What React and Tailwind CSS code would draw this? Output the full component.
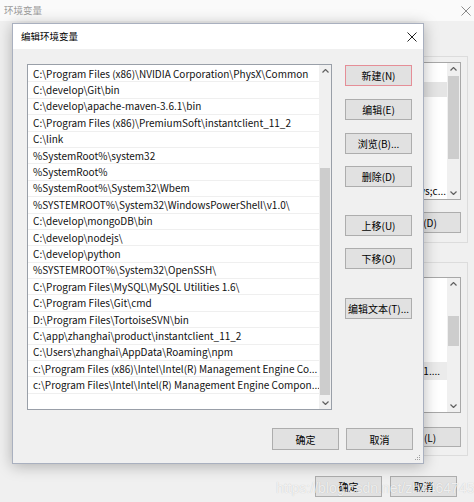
import React from 'react'

const paths = [
    'C:\\Program Files (x86)\\NVIDIA Corporation\\PhysX\\Common',
    'C:\\develop\\Git\\bin',
    'C:\\develop\\apache-maven-3.6.1\\bin',
    'C:\\Program Files (x86)\\PremiumSoft\\instantclient_11_2',
    'C:\\link',
    '%SystemRoot%\\system32',
    '%SystemRoot%',
    '%SystemRoot%\\System32\\Wbem',
    '%SYSTEMROOT%\\System32\\WindowsPowerShell\\v1.0\\',
    'C:\\develop\\mongoDB\\bin',
    'C:\\develop\\nodejs\\',
    'C:\\develop\\python',
    '%SYSTEMROOT%\\System32\\OpenSSH\\',
    'C:\\Program Files\\MySQL\\MySQL Utilities 1.6\\',
    'C:\\Program Files\\Git\\cmd',
    'D:\\Program Files\\TortoiseSVN\\bin',
    'C:\\app\\zhanghai\\product\\instantclient_11_2',
    'C:\\Users\\zhanghai\\AppData\\Roaming\\npm',
    'c:\\Program Files (x86)\\Intel\\Intel(R) Management Engine Co...',
    'c:\\Program Files\\Intel\\Intel(R) Management Engine Compon...',
]

const CloseX = ({ className }) => (
    <svg width="10" height="10" viewBox="0 0 10 10" className={className}>
        <path d="M0.5 0.5 L9.5 9.5 M9.5 0.5 L0.5 9.5" stroke="currentColor" strokeWidth="1" fill="none" />
    </svg>
)

const Up = () => (
    <svg width="7" height="4" viewBox="0 0 7 4">
        <path d="M0.5 3.5 L3.5 0.5 L6.5 3.5" stroke="#606060" strokeWidth="1.2" fill="none" />
    </svg>
)

const Down = () => (
    <svg width="7" height="4" viewBox="0 0 7 4">
        <path d="M0.5 0.5 L3.5 3.5 L6.5 0.5" stroke="#606060" strokeWidth="1.2" fill="none" />
    </svg>
)

// scrollbar: gap before the thumb, thumb height
const ScrollBar = ({ w, before, thumb }) => (
    <div className={`${w} h-full bg-[#f0f0f0] flex flex-col`}>
        <div className="h-[12px] flex items-center justify-center shrink-0"><Up /></div>
        <div style={{ height: before }} className="shrink-0" />
        <div style={{ height: thumb }} className="mx-[1px] bg-[#cdcdcd] shrink-0" />
        <div className="flex-1" />
        <div className="h-[12px] flex items-center justify-center shrink-0"><Down /></div>
    </div>
)

const Btn = ({ children, className = '' }) => (
    <div className={`flex items-center justify-center whitespace-nowrap bg-[#e1e1e1] border border-[#adadad] text-[10px] text-black font-['Noto_Sans_CJK_SC',sans-serif] ${className}`}>
        {children}
    </div>
)

export default function App() {
    return (
        <div className="relative w-[474px] h-[502px] overflow-hidden bg-[#f0f0f0] font-['Noto_Sans_CJK_SC',sans-serif]">
            {/* background window */}
            <div className="h-[21px] bg-[#fafafa] flex items-center justify-between pl-[4px] pr-[3px]">
                <span className="text-[9.5px] text-[#9b9b9b]">环境变量</span>
                <CloseX className="text-[#8a8a8a]" />
            </div>

            <div className="pl-[20px] pr-[6px]">
                <div className="mt-[35px] h-[187px] border border-[#dcdcdc] pt-[5px] pr-[6px] flex flex-col items-end">
                    <div className="w-full h-[138px] border border-[#a8a8a8] bg-white flex">
                        <div className="flex-1 flex flex-col">
                            <div className="h-[19px]" />
                            <div className="h-[15px] bg-[#e5e5e5]" />
                            <div className="flex-1" />
                            <div className="h-[16px] flex items-center justify-end pr-[1px] text-[10px] leading-none">Windows;c...</div>
                        </div>
                        <ScrollBar w="w-[13px]" before={1} thumb={83} />
                    </div>
                    <Btn className="mt-[12px] h-[21px] w-[82px]">删除(D)</Btn>
                </div>

                <div className="mt-[19px] h-[194px] border border-[#dcdcdc] pt-[14px] pr-[6px] flex flex-col items-end">
                    <div className="w-full h-[136px] border border-[#a8a8a8] bg-white flex">
                        <div className="flex-1 flex flex-col">
                            <div className="h-[84px]" />
                            <div className="h-[18px] bg-[#ebebeb] flex items-center justify-end pr-[7px] text-[10px] leading-none">jdk1....</div>
                        </div>
                        <ScrollBar w="w-[13px]" before={26} thumb={30} />
                    </div>
                    <Btn className="mt-[14px] h-[20px] w-[82px]">删除(L)</Btn>
                </div>
            </div>

            <div className="flex justify-end gap-[8px] pr-[17px] mt-[20px]">
                <Btn className="w-[67px] h-[21px]">确定</Btn>
                <Btn className="w-[67px] h-[21px]">取消</Btn>
            </div>

            {/* edit dialog */}
            <div className="absolute left-[12px] top-[23px] w-[412px] h-[441px] border border-[#a9b0bf] bg-[#f0f0f0] shadow-[0_2px_14px_rgba(0,0,0,0.28)] flex flex-col">
                <div className="h-[25px] bg-white flex items-center justify-between pl-[8px] pr-[6px] shrink-0">
                    <span className="text-[9.5px] text-black">编辑环境变量</span>
                    <CloseX className="text-[#222]" />
                </div>

                <div className="flex-1 flex flex-col pl-[14px] pr-[10px] pt-[15px]">
                    <div className="flex gap-[13px]">
                        <div className="w-[305px] h-[346px] border border-[#999fa8] bg-white flex">
                            <div className="flex-1 flex flex-col pt-[1px] overflow-hidden">
                                {paths.map((p, i) => (
                                    <div key={i} className="h-[16.4px] shrink-0 flex items-center pl-[5px] border-b border-[#efefef] text-[10px] text-[#111] whitespace-nowrap overflow-hidden leading-none">
                                        {p}
                                    </div>
                                ))}
                            </div>
                            <ScrollBar w="w-[12px]" before={91} thumb={227} />
                        </div>

                        <div className="w-[67px] flex flex-col pt-[1px]">
                            <Btn className="h-[21px] border-[#e58e97]">新建(N)</Btn>
                            <Btn className="h-[21px] mt-[13px]">编辑(E)</Btn>
                            <Btn className="h-[21px] mt-[13px]">浏览(B)...</Btn>
                            <Btn className="h-[21px] mt-[12px] border-[#3c7fc0]">删除(D)</Btn>
                            <Btn className="h-[21px] mt-[28px]">上移(U)</Btn>
                            <Btn className="h-[21px] mt-[12px]">下移(O)</Btn>
                            <Btn className="h-[21px] mt-[29px]">编辑文本(T)...</Btn>
                        </div>
                    </div>

                    <div className="flex justify-end gap-[7px] mt-[18px]">
                        <Btn className="w-[67px] h-[22px]">确定</Btn>
                        <Btn className="w-[67px] h-[22px]">取消</Btn>
                    </div>
                </div>

                {/* resize grip */}
                <svg width="6" height="6" viewBox="0 0 6 6" className="absolute right-[2px] bottom-[2px]">
                    <rect x="4" y="0" width="1" height="1" fill="#a0a0a0" />
                    <rect x="2" y="2" width="1" height="1" fill="#a0a0a0" />
                    <rect x="4" y="2" width="1" height="1" fill="#a0a0a0" />
                    <rect x="0" y="4" width="1" height="1" fill="#a0a0a0" />
                    <rect x="2" y="4" width="1" height="1" fill="#a0a0a0" />
                    <rect x="4" y="4" width="1" height="1" fill="#a0a0a0" />
                </svg>
            </div>

            {/* watermark */}
            <div className="absolute left-[276px] top-[478px] text-[14px] text-white/75 font-['Liberation_Sans',sans-serif] [text-shadow:0_0_1px_rgba(0,0,0,0.2)] whitespace-nowrap pointer-events-none">
                https://blog.csdn.net/zh44647457
            </div>
        </div>
    )
}
